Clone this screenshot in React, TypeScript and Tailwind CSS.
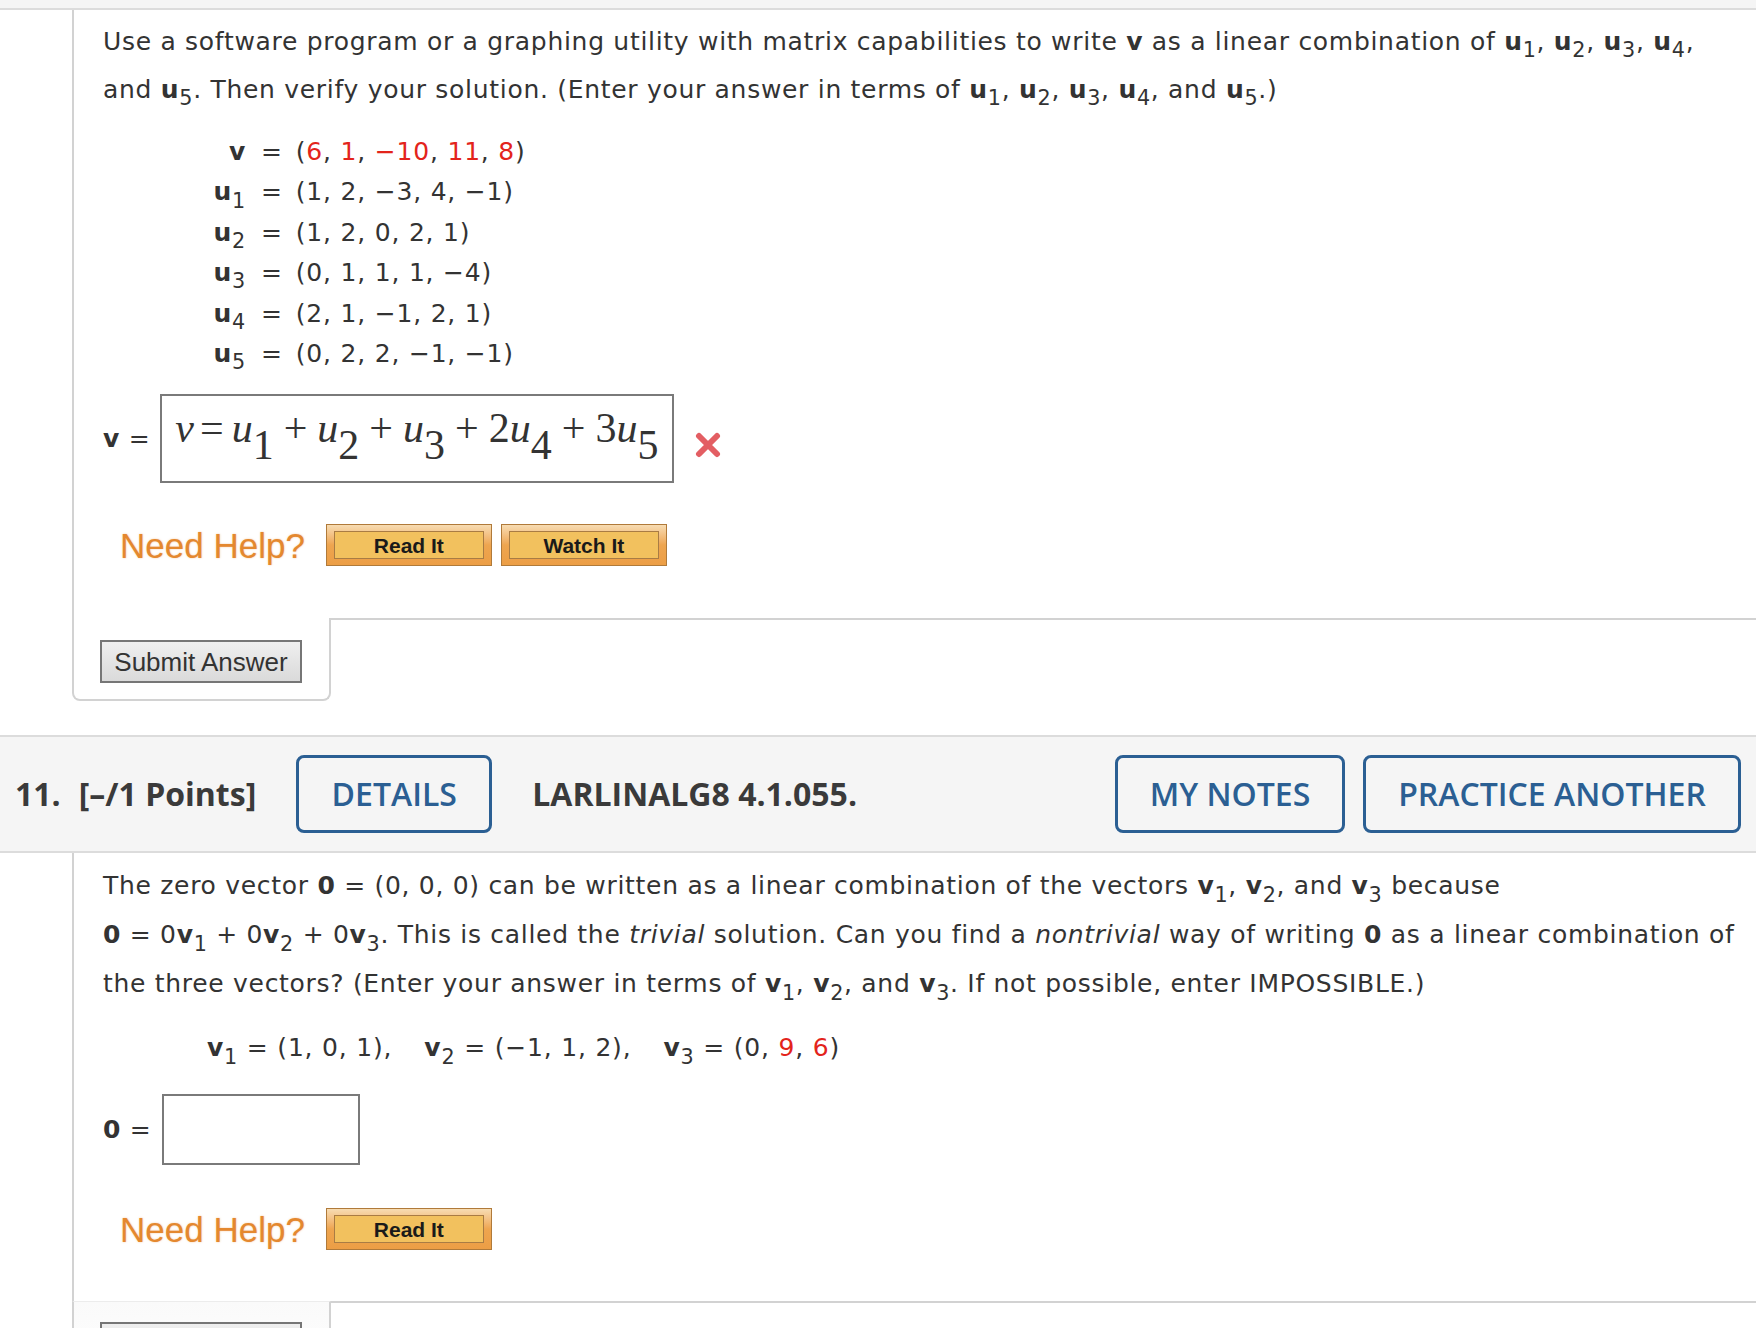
import React from 'react';

const body = "font-['DejaVu_Sans',Verdana,sans-serif]";
const open = "font-['Open_Sans',sans-serif]";
const arial = "font-['Liberation_Sans',Arial,sans-serif]";
const serif = "font-['Liberation_Serif','Times_New_Roman',serif]";

function S({ children }: { children: React.ReactNode }) {
  return <sub className="text-[0.83em] bottom-[-0.35em]">{children}</sub>;
}

function V({ n, s }: { n: string; s?: string }) {
  return (
    <span className="whitespace-nowrap">
      <b className="font-bold">{n}</b>
      {s && <S>{s}</S>}
    </span>
  );
}

function Red({ children }: { children: React.ReactNode }) {
  return <span className="text-[#e3241b]">{children}</span>;
}

function HelpButton({ label }: { label: string }) {
  return (
    <div className="w-[166px] h-[42px] border border-[#b07a3a] bg-linear-to-b from-[#f7dcb2] via-[#eea54f] to-[#ec9e45] px-[7px] py-[6px] flex">
      <div className="flex-1 border border-[#a97c44] bg-[#f2c15e] flex items-center justify-center">
        <span className={`${arial} font-bold text-[21px] text-[#1a1a1a] leading-none`}>{label}</span>
      </div>
    </div>
  );
}

function NeedHelp({ watch }: { watch?: boolean }) {
  return (
    <div className="flex items-center">
      <span className={`${arial} ml-[17px] text-[35px] text-[#e4882f] leading-none [text-shadow:0_0_2px_rgba(235,150,70,0.55)]`}>
        Need Help?
      </span>
      <div className="ml-[21px] flex gap-[9px]">
        <HelpButton label="Read It" />
        {watch && <HelpButton label="Watch It" />}
      </div>
    </div>
  );
}

function SubmitButton() {
  return (
    <div className={`${arial} w-[202px] h-[43px] border-2 border-[#767676] bg-linear-to-b from-[#efefef] to-[#dadada] flex items-center justify-center text-[26px] text-[#333] leading-none`}>
      Submit Answer
    </div>
  );
}

function RedX() {
  return (
    <svg width="28" height="26" viewBox="0 0 28 26" className="ml-[20px] relative top-[6px]">
      <path d="M5 4 L23 22 M23 4 L5 22" stroke="#e35e63" strokeWidth="6" strokeLinecap="round" />
    </svg>
  );
}

function HeaderButton({ label, w }: { label: string; w: string }) {
  return (
    <div className={`${w} h-[78px] border-[3px] border-[#2b5f93] rounded-[8px] flex items-center justify-center text-[#2b5f93] font-semibold text-[32px]`}>
      {label}
    </div>
  );
}

const vectors: [string, string | undefined, React.ReactNode][] = [
  ['v', undefined, <>(<Red>6</Red>, <Red>1</Red>, <Red>−10</Red>, <Red>11</Red>, <Red>8</Red>)</>],
  ['u', '1', '(1, 2, −3, 4, −1)'],
  ['u', '2', '(1, 2, 0, 2, 1)'],
  ['u', '3', '(0, 1, 1, 1, −4)'],
  ['u', '4', '(2, 1, −1, 2, 1)'],
  ['u', '5', '(0, 2, 2, −1, −1)'],
];

function MathSub({ children }: { children: React.ReactNode }) {
  return <span className="relative top-[17px] not-italic">{children}</span>;
}

function Plus() {
  return <span className="mx-[10px]">+</span>;
}

export default function App() {
  return (
    <div className={`w-[1756px] h-[1328px] overflow-hidden bg-white text-[#333] ${body}`}>
      <div className="h-[8px] bg-[#f5f5f5] border-b-2 border-[#dcdcdc] box-content" />

      {/* question 10 body */}
      <div className="ml-[72px]">
        <div className="border-l-2 border-[#d2d2d2] pl-[29px] pt-[8px] pb-[52px]">
          <p className="text-[25px] tracking-[0.7px] leading-[48px] whitespace-nowrap">
            Use a software program or a graphing utility with matrix capabilities to write <V n="v" /> as a linear combination of{' '}
            <V n="u" s="1" />, <V n="u" s="2" />, <V n="u" s="3" />, <V n="u" s="4" />,
            <br />
            and <V n="u" s="5" />. Then verify your solution. (Enter your answer in terms of <V n="u" s="1" />, <V n="u" s="2" />,{' '}
            <V n="u" s="3" />, <V n="u" s="4" />, and <V n="u" s="5" />.)
          </p>

          <div className="mt-[18px] text-[25px] tracking-[0.8px] leading-[40.4px]">
            {vectors.map(([n, s, val], i) => (
              <div key={i} className="flex">
                <span className="w-[143px] text-right">
                  <V n={n} s={s} />
                </span>
                <span className="ml-[15px]">=</span>
                <span className="ml-[13px] whitespace-nowrap">{val}</span>
              </div>
            ))}
          </div>

          <div className="mt-[20px] flex items-center text-[25px] tracking-[0.7px]">
            <span>
              <b>v</b> =
            </span>
            <div className={`ml-[10px] w-[514px] h-[89px] border-2 border-[#7a7a7a] flex items-center pl-[13px] pb-[21px] ${serif} text-[42px] tracking-normal leading-none text-[#333]`}>
              <i>v</i>
              <span className="ml-[6px] mr-[8px]">=</span>
              <i>u</i>
              <MathSub>1</MathSub>
              <Plus />
              <i>u</i>
              <MathSub>2</MathSub>
              <Plus />
              <i>u</i>
              <MathSub>3</MathSub>
              <Plus />
              <span>2</span>
              <i>u</i>
              <MathSub>4</MathSub>
              <Plus />
              <span>3</span>
              <i>u</i>
              <MathSub>5</MathSub>
            </div>
            <RedX />
          </div>

          <div className="mt-[41px]">
            <NeedHelp watch />
          </div>
        </div>

        <div className="flex">
          <div className="w-[259px] border-l-2 border-r-2 border-b-2 border-[#d2d2d2] rounded-b-[8px] pl-[26px] pt-[22px] pb-[16px]">
            <SubmitButton />
          </div>
          <div className="flex-1 border-t-2 border-[#d2d2d2]" />
        </div>
      </div>

      {/* question 11 header */}
      <div className={`mt-[34px] h-[118px] bg-[#f5f5f5] border-t-2 border-b-2 border-[#dcdcdc] flex items-center ${open} text-[#3a3a3a]`}>
        <span className="ml-[15px] font-bold text-[32px]">11.</span>
        <span className="ml-[18px] font-bold text-[32px]">[–/1 Points]</span>
        <div className="ml-[40px]">
          <HeaderButton label="DETAILS" w="w-[196px]" />
        </div>
        <span className="ml-[40px] font-bold text-[32px]">LARLINALG8 4.1.055.</span>
        <div className="ml-auto flex gap-[18px] mr-[15px]">
          <HeaderButton label="MY NOTES" w="w-[230px]" />
          <HeaderButton label="PRACTICE ANOTHER" w="w-[378px]" />
        </div>
      </div>

      {/* question 11 body */}
      <div className="ml-[72px]">
        <div className="border-l-2 border-[#d2d2d2] pl-[29px] pt-[8px] pb-[51px]">
          <p className="text-[25px] tracking-[0.7px] leading-[49px] whitespace-nowrap">
            The zero vector <b>0</b> = (0, 0, 0) can be written as a linear combination of the vectors <V n="v" s="1" />,{' '}
            <V n="v" s="2" />, and <V n="v" s="3" /> because
            <br />
            <b>0</b> = 0<V n="v" s="1" /> + 0<V n="v" s="2" /> + 0<V n="v" s="3" />. This is called the <i>trivial</i> solution. Can you
            find a <i>nontrivial</i> way of writing <b>0</b> as a linear combination of
            <br />
            the three vectors? (Enter your answer in terms of <V n="v" s="1" />, <V n="v" s="2" />, and <V n="v" s="3" />. If not
            possible, enter IMPOSSIBLE.)
          </p>

          <div className="mt-[20px] ml-[104px] text-[25px] tracking-[0.8px] leading-[40px] whitespace-nowrap flex">
            <span>
              <V n="v" s="1" /> = (1, 0, 1),
            </span>
            <span className="ml-[32px]">
              <V n="v" s="2" /> = (−1, 1, 2),
            </span>
            <span className="ml-[32px]">
              <V n="v" s="3" /> = (0, <Red>9</Red>, <Red>6</Red>)
            </span>
          </div>

          <div className="mt-[26px] flex items-center text-[25px] tracking-[0.7px]">
            <span>
              <b>0</b> =
            </span>
            <div className="ml-[11px] w-[198px] h-[71px] border-2 border-[#7a7a7a]" />
          </div>

          <div className="mt-[43px]">
            <NeedHelp />
          </div>
        </div>

        <div className="flex">
          <div className="w-[259px] border-l-2 border-r-2 border-t border-[#d2d2d2] border-t-[#ececec] bg-linear-to-b from-[#fafafa] to-white pl-[26px] pt-[20px] pb-[16px]">
            <SubmitButton />
          </div>
          <div className="flex-1 border-t-2 border-[#d2d2d2]" />
        </div>
      </div>
    </div>
  );
}
